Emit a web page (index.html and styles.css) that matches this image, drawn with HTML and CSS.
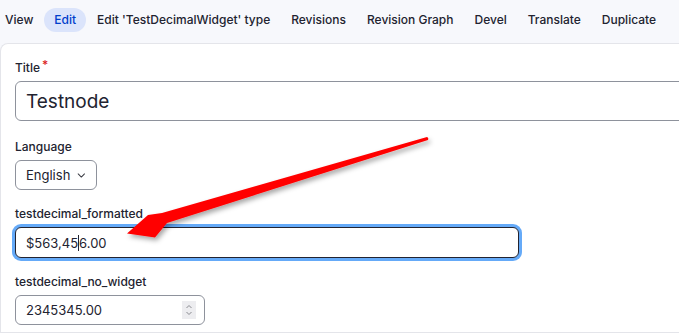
FILE: index.html
```html
<!DOCTYPE html>
<html lang="en">

<head>
    <meta charset="UTF-8" />
    <meta name="viewport" content="width=device-width, initial-scale=1.0" />
    <title>Edit Testnode</title>
    <link rel="stylesheet" href="styles.css">
</head>

<body>
    <nav class="tabs">
        <a class="tab">View</a>
        <a class="tab active">Edit</a>
        <a class="tab">Edit 'TestDecimalWidget' type</a>
        <a class="tab">Revisions</a>
        <a class="tab">Revision Graph</a>
        <a class="tab">Devel</a>
        <a class="tab">Translate</a>
        <a class="tab">Duplicate</a>
    </nav>
    <main class="card">
        <div class="field field-title">
            <label class="label">Title<span class="required">*</span></label>
            <div class="input input-title">Testnode</div>
        </div>
        <div class="field">
            <label class="label">Language</label>
            <div class="input input-select">
                English
                <svg class="chevron" width="11" height="7" viewBox="0 0 11 7">
                    <path d="M1.5 1.5l4 4 4-4" fill="none" stroke="#3b3c44" stroke-width="1.3" stroke-linecap="round" stroke-linejoin="round" />
                </svg>
            </div>
        </div>
        <div class="field">
            <label class="label">testdecimal_formatted</label>
            <div class="input input-focus">$563,45<span class="caret"></span>6.00</div>
        </div>
        <div class="field">
            <label class="label">testdecimal_no_widget</label>
            <div class="input input-number">
                2345345.00
                <span class="spinner">
                    <svg width="14" height="18" viewBox="0 0 14 18">
                        <path d="M4.5 7l2.5-2.5 2.5 2.5M4.5 11l2.5 2.5 2.5-2.5" fill="none" stroke="#8a8b90" stroke-width="1" />
                    </svg>
                </span>
            </div>
        </div>
    </main>
    <svg class="annotation" width="679" height="333" viewBox="0 0 679 333">
        <defs>
            <filter id="shadow" x="-20%" y="-20%" width="140%" height="140%">
                <feDropShadow dx="2" dy="3" stdDeviation="2.5" flood-color="#000" flood-opacity="0.35" />
            </filter>
        </defs>
        <path d="M427 137 L162 213 L148 215 L127 233.5 L155 237.5 L167 223 L428 140 Q429 138 427 137 Z" fill="#ff0000" filter="url(#shadow)" />
    </svg>
</body>

</html>
```

FILE: styles.css
```css
* {
    margin: 0;
    padding: 0;
    box-sizing: border-box;
}

body {
    font-family: "Inter", "Noto Sans", sans-serif;
    background-color: #f7f8fc;
    color: #222330;
    width: 679px;
    height: 333px;
    overflow: hidden;
    position: relative;
}

.tabs {
    display: flex;
    align-items: center;
    height: 43px;
    margin-left: -5px;
    padding-bottom: 4px;
}

.tab {
    font-size: 12px;
    font-weight: 500;
    color: #222330;
    padding: 0 10px;
    margin-right: 1px;
    height: 24px;
    line-height: 24px;
    border-radius: 12px;
    white-space: nowrap;
}

.tab.active {
    background-color: #dbe4fb;
    color: #003ecc;
}

.card {
    background-color: #fff;
    border: 1px solid #e4e5ea;
    border-right: 0;
    border-radius: 8px 0 0 0;
    height: 290px;
    padding: 17px 0 0 14px;
    overflow: hidden;
}

.field {
    margin-bottom: 17px;
}

.field-title {
    margin-bottom: 19px;
}

.label {
    display: block;
    font-size: 12px;
    font-weight: 500;
    line-height: 14px;
    margin-bottom: 6px;
}

.required {
    color: #dc2323;
    margin-left: 2px;
    position: relative;
    top: -3px;
}

.input {
    display: flex;
    align-items: center;
    border: 1px solid #8e929c;
    border-radius: 6px;
    background: #fff;
    font-size: 13px;
    padding: 0 10px;
}

.input-title {
    height: 40px;
    width: 700px;
    font-size: 19px;
}

.input-select {
    width: 82px;
    height: 30px;
    gap: 7px;
}

.input-focus {
    width: 504px;
    height: 31px;
    border-color: #222330;
    box-shadow: 0 0 0 3px #65aaf8;
    margin-top: 1px;
}

.caret {
    display: inline-block;
    width: 1px;
    height: 16px;
    background: #222330;
}

.input-number {
    width: 190px;
    height: 30px;
    justify-content: space-between;
    padding-right: 8px;
}

.spinner {
    display: flex;
    background: #ededf0;
    width: 14px;
    height: 18px;
}

.annotation {
    position: absolute;
    left: 0;
    top: 0;
    pointer-events: none;
}
```
